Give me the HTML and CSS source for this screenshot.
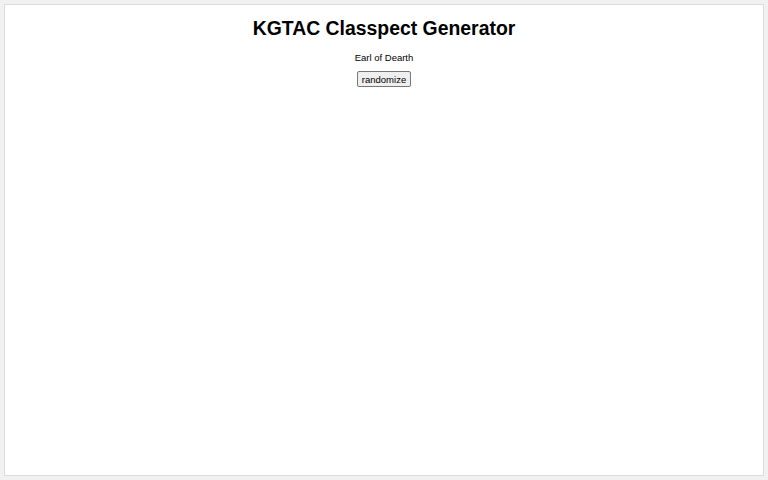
FILE: index.html
```html
<!DOCTYPE html>
<html>
<head>
<meta charset="utf-8">
<link rel="stylesheet" href="styles.css">
</head>
<body>
<div class="panel">
  <h1 class="title">KGTAC Classpect Generator</h1>
  <p class="result">Earl of Dearth</p>
  <button class="btn">randomize</button>
</div>
</body>
</html>
```
FILE: styles.css
```css
html, body {
  margin: 0;
  height: 100%;
}
body {
  background: #f1f1f1;
  padding: 4px 4px 4px 4px;
  box-sizing: border-box;
  font-family: "Liberation Sans", Arial, sans-serif;
}
.panel {
  background: #fff;
  border: 1px solid #dcdcdc;
  height: 100%;
  box-sizing: border-box;
  text-align: center;
  padding-top: 12px;
}
.title {
  font-size: 19.4px;
  font-weight: bold;
  margin: 0;
  line-height: 23px;
  color: #000;
}
.result {
  font-size: 9.5px;
  margin: 12px 0 5px;
  line-height: 12px;
  color: #000;
}
.btn {
  font-family: "Liberation Sans", Arial, sans-serif;
  font-size: 9.5px;
  padding: 2px 4px 1px;
  background: #efefef;
  border: 1px solid #767676;
  border-radius: 2px;
  color: #000;
}
```
